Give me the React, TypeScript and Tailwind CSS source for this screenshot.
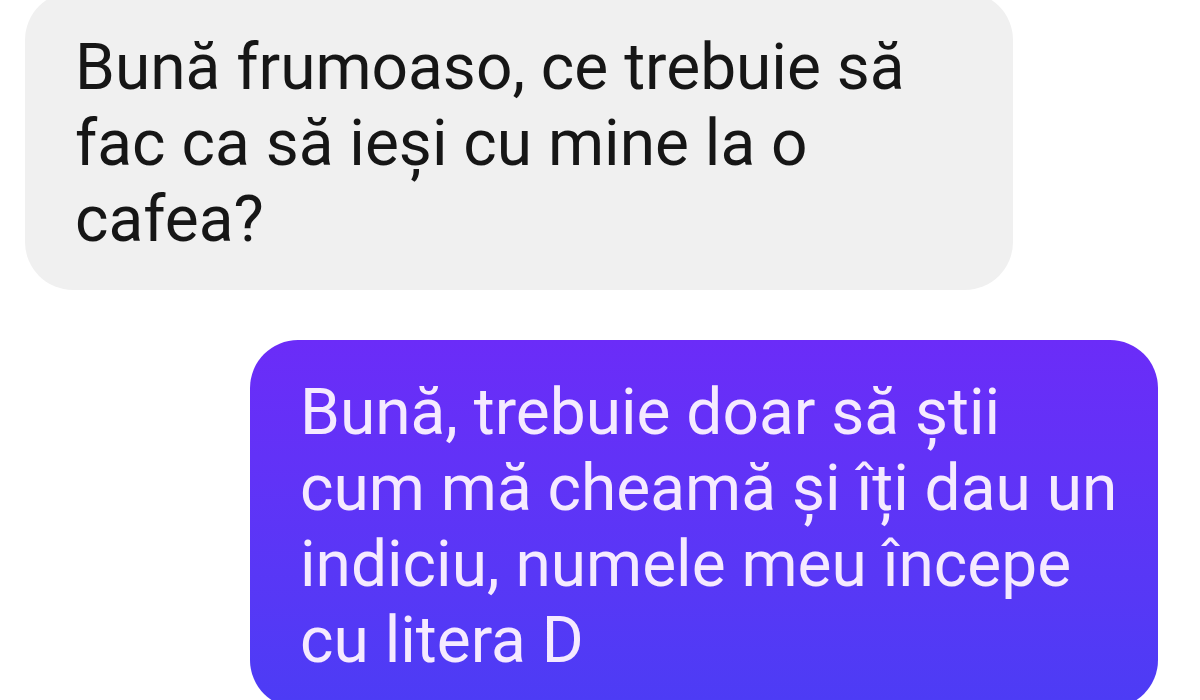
import React from "react";

export default function App() {
  const font = { fontFamily: "Roboto, 'Noto Sans', 'Liberation Sans', sans-serif" };
  return (
    <div className="w-[1200px] h-[700px] overflow-hidden bg-white" style={font}>
      <div className="flex flex-col">
        <div className="ml-[25px] -mt-[8px] w-[988px] h-[298px] rounded-[48px] bg-[#f0f0f0] pl-[50px] pt-[38px] text-[64px] leading-[76px] text-[#161616]">
          <div className="whitespace-nowrap">Bună frumoaso, ce trebuie să</div>
          <div className="whitespace-nowrap">fac ca să ieși cu mine la o</div>
          <div className="whitespace-nowrap">cafea?</div>
        </div>
        <div className="mt-[50px] ml-[250px] w-[908px] h-[368px] rounded-[48px] bg-gradient-to-b from-[#6b2cf8] to-[#4c3cf5] pl-[50px] pt-[35px] text-[64px] leading-[76px] text-[#f5eaff]">
          <div className="whitespace-nowrap">Bună, trebuie doar să știi</div>
          <div className="whitespace-nowrap">cum mă cheamă și îți dau un</div>
          <div className="whitespace-nowrap">indiciu, numele meu începe</div>
          <div className="whitespace-nowrap">cu litera D</div>
        </div>
      </div>
    </div>
  );
}
